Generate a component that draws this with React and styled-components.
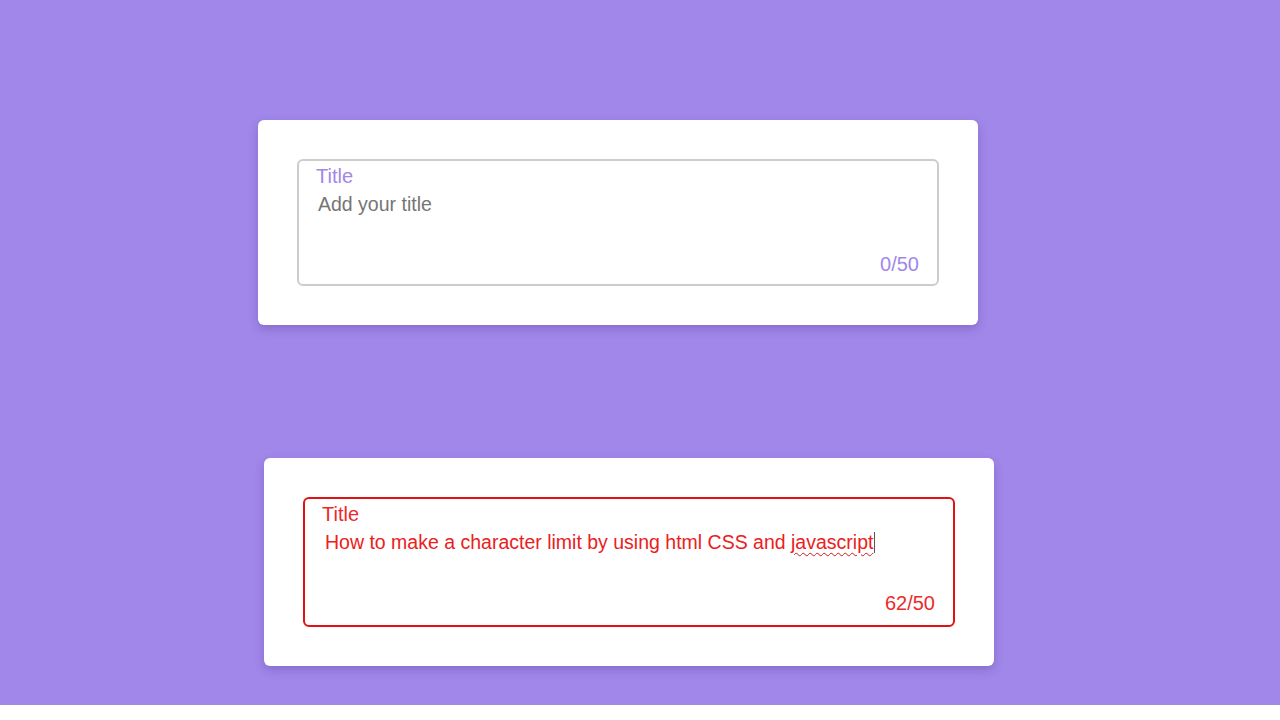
import React from 'react';
import styled, { createGlobalStyle } from 'styled-components';

const GlobalStyle = createGlobalStyle`
  html, body {
    margin: 0;
    padding: 0;
    background: #ffffff;
  }
  body {
    font-family: "Liberation Sans", Arial, sans-serif;
  }
`;

const Page = styled.div`
  height: 705px;
  background: #a087e9;
  display: flex;
  flex-direction: column;
  align-items: flex-start;
  padding-top: 120px;
  box-sizing: border-box;
  gap: 133px;
`;

const Card = styled.div`
  margin-left: ${p => p.left}px;
  width: ${p => p.width}px;
  padding: 39px;
  box-sizing: border-box;
  background: #ffffff;
  border-radius: 6px;
  box-shadow: 0 4px 10px rgba(60, 30, 120, 0.25);
`;

const Field = styled.div`
  height: ${p => p.height}px;
  box-sizing: border-box;
  border: 2px solid ${p => (p.over ? '#e01212' : '#cccccc')};
  border-radius: 6px;
  padding: 4px 18px ${p => p.bottom}px 17px;
  display: flex;
  flex-direction: column;
`;

const Label = styled.div`
  font-size: 20px;
  line-height: 23px;
  color: ${p => (p.over ? '#ec2a2a' : '#a087e9')};
`;

const Content = styled.div`
  margin-top: 5px;
  padding-left: ${p => p.indent}px;
  font-size: 19.5px;
  line-height: 22px;
  color: ${p => (p.placeholder ? '#757575' : '#ec2020')};
  white-space: nowrap;
`;

const Misspelled = styled.span`
  text-decoration: underline wavy #d01818;
  text-decoration-thickness: 1px;
  text-underline-offset: 3px;
`;

const Caret = styled.span`
  display: inline-block;
  width: 1px;
  height: 21px;
  margin-left: 1px;
  vertical-align: -4px;
  background: #555555;
`;

const Counter = styled.div`
  margin-top: auto;
  align-self: flex-end;
  font-size: 20px;
  line-height: 23px;
  color: ${p => (p.over ? '#ec2a2a' : '#a087e9')};
`;

const LIMIT = 50;

const TitleInput = ({ text, height, bottom, left, width }) => {
  const over = text.length > LIMIT;
  const last = 'javascript';
  const head = text.endsWith(last) ? text.slice(0, -last.length) : text;
  return (
    <Card left={left} width={width}>
      <Field height={height} bottom={bottom} over={over}>
        <Label over={over}>Title</Label>
        {text ? (
          <Content indent={3}>
            {head}
            {text.endsWith(last) && <Misspelled>{last}</Misspelled>}
            <Caret />
          </Content>
        ) : (
          <Content indent={2} placeholder="true">Add your title</Content>
        )}
        <Counter over={over}>
          {over ? 62 : text.length}/{LIMIT}
        </Counter>
      </Field>
    </Card>
  );
};

export default function App() {
  return (
    <>
      <GlobalStyle />
      <Page>
        <TitleInput text="" height={127} bottom={8} left={258} width={720} />
        <TitleInput
          text="How to make a character limit by using html CSS and javascript"
          height={130}
          bottom={10}
          left={264}
          width={730}
        />
      </Page>
    </>
  );
}
